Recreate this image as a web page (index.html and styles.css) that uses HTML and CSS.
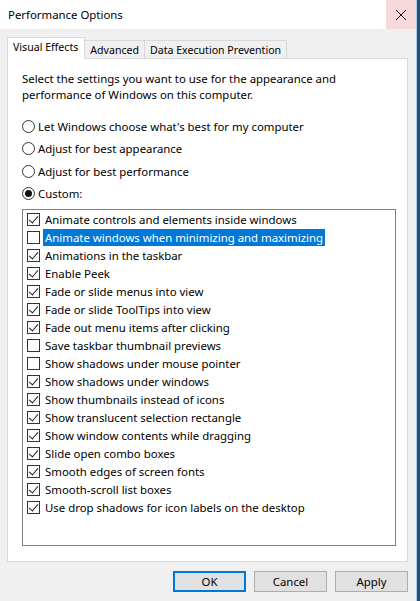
FILE: index.html
```html
<!DOCTYPE html>
<html>
<head>
<meta charset="utf-8">
<link rel="stylesheet" href="styles.css">
</head>
<body>
<div class="screen">
  <div class="window">
    <div class="titlebar">
      <div class="title">Performance Options</div>
      <div class="close">
        <svg width="12" height="12" viewBox="0 0 12 12"><path d="M1 1 L11 11 M11 1 L1 11" stroke="#111" stroke-width="1" fill="none"/></svg>
      </div>
    </div>
    <div class="body">
      <div class="tabs">
        <div class="tab active">Visual Effects</div>
        <div class="tab">Advanced</div>
        <div class="tab">Data Execution Prevention</div>
      </div>
      <div class="panel">
        <p class="intro">Select the settings you want to use for the appearance and performance of Windows on this computer.</p>
        <div class="radios">
          <div class="radio"><span class="circle"></span>Let Windows choose what's best for my computer</div>
          <div class="radio"><span class="circle"></span>Adjust for best appearance</div>
          <div class="radio"><span class="circle"></span>Adjust for best performance</div>
          <div class="radio"><span class="circle on"></span>Custom:</div>
        </div>
        <div class="listbox">
          <div class="item"><span class="cb on"></span><span class="lbl">Animate controls and elements inside windows</span></div>
          <div class="item"><span class="cb"></span><span class="lbl sel">Animate windows when minimizing and maximizing</span></div>
          <div class="item"><span class="cb on"></span><span class="lbl">Animations in the taskbar</span></div>
          <div class="item"><span class="cb on"></span><span class="lbl">Enable Peek</span></div>
          <div class="item"><span class="cb on"></span><span class="lbl">Fade or slide menus into view</span></div>
          <div class="item"><span class="cb on"></span><span class="lbl">Fade or slide ToolTips into view</span></div>
          <div class="item"><span class="cb on"></span><span class="lbl">Fade out menu items after clicking</span></div>
          <div class="item"><span class="cb"></span><span class="lbl">Save taskbar thumbnail previews</span></div>
          <div class="item"><span class="cb"></span><span class="lbl">Show shadows under mouse pointer</span></div>
          <div class="item"><span class="cb on"></span><span class="lbl">Show shadows under windows</span></div>
          <div class="item"><span class="cb on"></span><span class="lbl">Show thumbnails instead of icons</span></div>
          <div class="item"><span class="cb on"></span><span class="lbl">Show translucent selection rectangle</span></div>
          <div class="item"><span class="cb on"></span><span class="lbl">Show window contents while dragging</span></div>
          <div class="item"><span class="cb on"></span><span class="lbl">Slide open combo boxes</span></div>
          <div class="item"><span class="cb on"></span><span class="lbl">Smooth edges of screen fonts</span></div>
          <div class="item"><span class="cb on"></span><span class="lbl">Smooth-scroll list boxes</span></div>
          <div class="item"><span class="cb on"></span><span class="lbl">Use drop shadows for icon labels on the desktop</span></div>
        </div>
      </div>
      <div class="buttons">
        <div class="btn default">OK</div>
        <div class="btn">Cancel</div>
        <div class="btn">Apply</div>
      </div>
    </div>
  </div>
  <div class="desktop"></div>
</div>
</body>
</html>
```
FILE: styles.css
```css
* { box-sizing: border-box; }
html, body { margin: 0; padding: 0; }
body {
  font-family: "Noto Sans", "DejaVu Sans", sans-serif;
  font-size: 11.4px;
  color: #000;
  background: #f0f0f0;
  width: 420px;
  height: 601px;
  overflow: hidden;
}
.screen { display: flex; height: 601px; }
.window { width: 416px; background: #f0f0f0; display: flex; flex-direction: column; }
.desktop {
  width: 4px;
  background: linear-gradient(to right, #a9cbe6 0, #a9cbe6 1px, #24557e 1px, #1b4a70 100%);
}
.titlebar {
  height: 29px;
  background: #fff;
  display: flex;
  align-items: center;
  justify-content: space-between;
}
.title { padding-left: 8px; font-size: 11.4px; }
.close {
  width: 30px;
  height: 29px;
  background: #f7d9dc;
  display: flex;
  align-items: center;
  justify-content: center;
}
.body { padding: 8px 8px 0 7px; }
.tabs { display: flex; align-items: flex-end; height: 21px; font-size: 10.6px; }
.tab {
  height: 18px;
  padding: 0 5px;
  border: 1px solid #d9d9d9;
  border-bottom: none;
  border-left: none;
  background: #f0f0f0;
  line-height: 18px;
}
.tab.active {
  height: 22px;
  background: #fff;
  border-left: 1px solid #d9d9d9;
  padding: 0 6px 0 5px;
  line-height: 19px;
  margin-bottom: -1px;
  position: relative;
  z-index: 1;
}
.panel {
  height: 504px;
  width: 401px;
  background: #fff;
  border: 1px solid #d9d9d9;
  padding: 12px 13px 0 14px;
}
.intro { margin: 0; line-height: 16px; width: 372px; }
.radios { margin-top: 12px; display: flex; flex-direction: column; }
.radio { display: flex; align-items: center; height: 22.5px; }
.circle {
  width: 13px;
  height: 13px;
  border: 1px solid #333;
  border-radius: 50%;
  margin-right: 3px;
  display: flex;
  align-items: center;
  justify-content: center;
}
.circle.on::after {
  content: "";
  width: 7px;
  height: 7px;
  border-radius: 50%;
  background: #111;
}
.listbox {
  margin-top: 4px;
  height: 337px;
  width: 374px;
  border: 1px solid #828282;
}
.item { display: flex; align-items: center; height: 18px; padding-left: 4px; }
.cb {
  width: 13px;
  height: 13px;
  border: 1px solid #333;
  margin-right: 3px;
  position: relative;
  flex: none;
}
.cb.on::after {
  content: "";
  position: absolute;
  left: 3px;
  top: 0px;
  width: 4px;
  height: 8px;
  border-right: 1.2px solid #222;
  border-bottom: 1.2px solid #222;
  transform: rotate(40deg);
}
.lbl { padding: 0 2px; line-height: 17px; }
.lbl.sel { background: #0078d7; color: #fff; }
.buttons {
  display: flex;
  justify-content: flex-end;
  gap: 8px;
  margin-top: 9px;
}
.btn {
  width: 73px;
  height: 21px;
  border: 1px solid #adadad;
  background: #e1e1e1;
  display: flex;
  align-items: center;
  justify-content: center;
}
.btn.default { border: 2px solid #0078d7; }
```
